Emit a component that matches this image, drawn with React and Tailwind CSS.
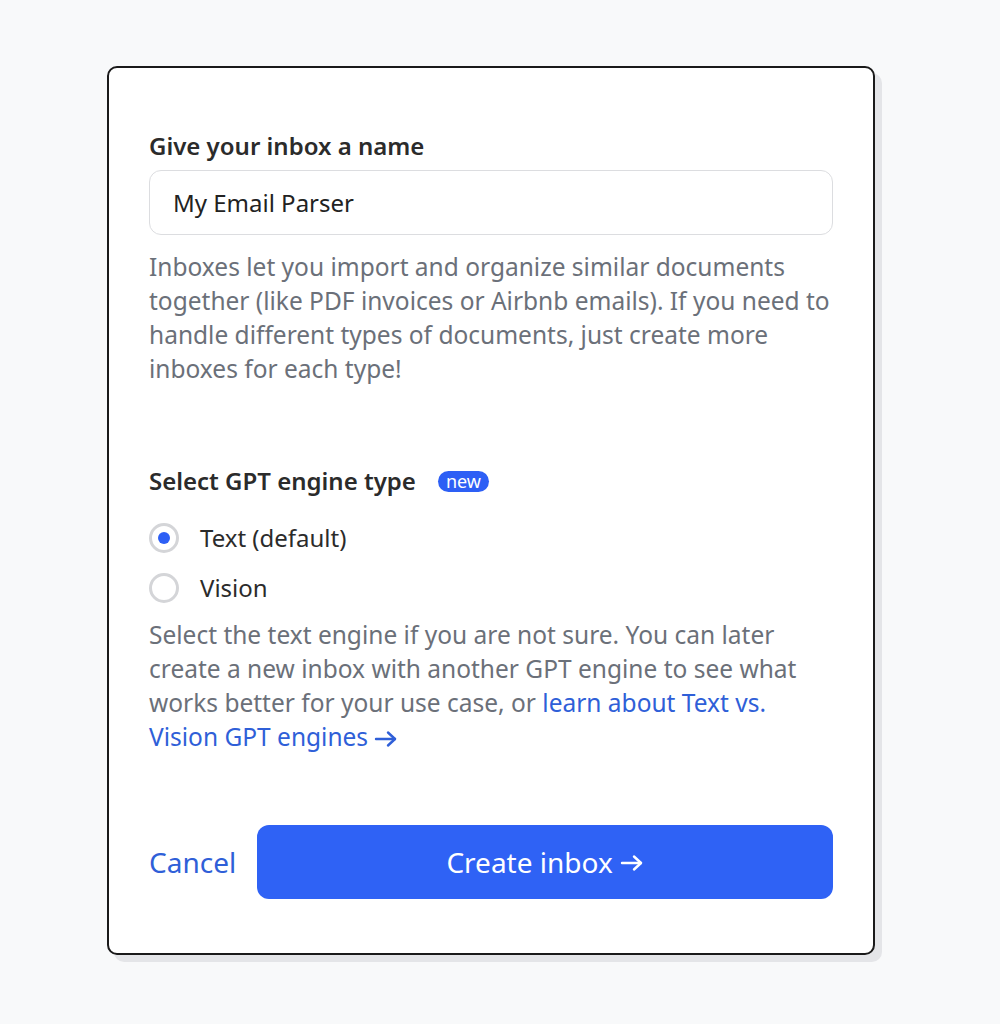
import React from "react";

function Arrow({ className }) {
  return (
    <svg className={className} viewBox="0 0 24 18" fill="none" stroke="currentColor" strokeWidth="2.4" strokeLinecap="round" strokeLinejoin="round">
      <path d="M2 9h19" />
      <path d="M14 2.5l7 6.5-7 6.5" />
    </svg>
  );
}

export default function App() {
  return (
    <div className="min-h-[1024px] w-full bg-[#f8f9fa] pt-[66px]" style={{ fontFamily: '"Noto Sans", sans-serif' }}>
      <div className="ml-[107px] w-[768px] h-[889px] rounded-[10px] border-2 border-[#1a1a1a] bg-white shadow-[7px_7px_0_0_#e4e5e8] px-[40px] pt-[62px]">
        <label className="block text-[24px] leading-[32px] font-semibold text-[#2b2b2b]">Give your inbox a name</label>
        <div className="mt-[8px] h-[65px] rounded-[12px] border border-[#dcdde0] flex items-center px-[23px] text-[24px] text-[#222]">
          My Email Parser
        </div>
        <p className="mt-[15px] text-[24.5px] leading-[34px] text-[#6b7079]">
          Inboxes let you import and organize similar documents together (like PDF invoices or Airbnb emails). If you need to handle different types of documents, just create more inboxes for each type!
        </p>
        <div className="mt-[79px] flex items-center gap-[22px]">
          <span className="text-[24px] leading-[32px] font-semibold text-[#2b2b2b]">Select GPT engine type</span>
          <span className="rounded-full bg-[#2d5ff5] text-white text-[18px] leading-[20px] px-[8px] pb-[1px]">new</span>
        </div>
        <div className="mt-[26px] flex items-center gap-[21px]">
          <span className="w-[30px] h-[30px] rounded-full border-[3px] border-[#d4d5d8] flex items-center justify-center">
            <span className="w-[12px] h-[12px] rounded-full bg-[#2d5ff5]"></span>
          </span>
          <span className="text-[24px] leading-[30px] text-[#2b2b2b]">Text (default)</span>
        </div>
        <div className="mt-[20px] flex items-center gap-[21px]">
          <span className="w-[30px] h-[30px] rounded-full border-[3px] border-[#d4d5d8]"></span>
          <span className="text-[24px] leading-[30px] text-[#2b2b2b]">Vision</span>
        </div>
        <p className="mt-[15px] text-[24.5px] leading-[34px] text-[#6b7079]">
          Select the text engine if you are not sure. You can later create a new inbox with another GPT engine to see what works better for your use case, or{" "}
          <a className="text-[#2f5fd8]">
            learn about Text vs. Vision GPT engines{" "}
            <Arrow className="inline-block w-[24px] h-[18px] align-[-2px]" />
          </a>
        </p>
        <div className="mt-[71px] flex items-center gap-[21px]">
          <button className="text-[28px] text-[#2f5fd8] leading-[34px]">Cancel</button>
          <button className="flex-1 h-[74px] rounded-[12px] bg-[#2f62f5] text-white text-[28px] flex items-center justify-center gap-[7px]">
            <span>Create inbox</span>
            <Arrow className="w-[24px] h-[18px] mt-[2px]" />
          </button>
        </div>
      </div>
    </div>
  );
}
